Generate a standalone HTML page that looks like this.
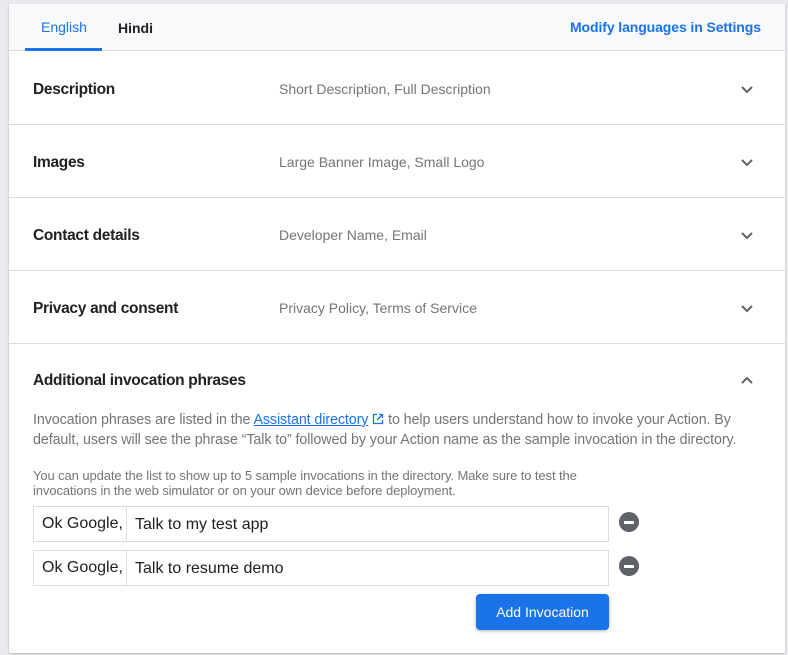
<!DOCTYPE html>
<html><head><meta charset="utf-8"><style>
*{margin:0;padding:0;box-sizing:border-box}
body{width:788px;height:655px;background:#e8eaed;font-family:"Liberation Sans",Arial,sans-serif;position:relative;overflow:hidden;color:#202124}
.card{position:absolute;left:9px;top:4px;width:776px;height:649px;background:#fff;box-shadow:0 1px 2px rgba(60,64,67,.3)}
.hdr{position:absolute;left:0;top:0;width:776px;height:47px;background:#f8f9fa;border-bottom:1px solid #dadce0}
.a{position:absolute;white-space:nowrap}
.row{position:absolute;left:0;width:776px;height:73px;border-bottom:1px solid #dadce0}
.t{position:absolute;left:24px;top:29px;font-size:15.5px;font-weight:bold;letter-spacing:-0.3px}
.s{position:absolute;left:270px;top:29px;font-size:14px;color:#757575}
.chev{position:absolute;left:731px;top:33px}
.inp{position:absolute;left:24px;width:576px;height:36px;border:1px solid #dadce0;font-size:16px}
.inp .p{position:absolute;left:8px;top:8px}
.inp .d{position:absolute;left:92px;top:0;height:34px;border-left:1px solid #dadce0}
.inp .v{position:absolute;left:101px;top:9px}
.minus{position:absolute;left:610px;width:20px;height:20px;border-radius:50%;background:#5f6368}
.minus:after{content:"";position:absolute;left:5px;top:9px;width:10px;height:2.5px;background:#fff}
</style></head><body>
<div class="card">
<div class="hdr">
<div class="a" style="left:32px;top:15px;font-size:14px;color:#1a73e8">English</div>
<div class="a" style="left:16px;top:44px;width:77px;height:3px;background:#1a73e8"></div>
<div class="a" style="left:109px;top:16px;font-size:14px;font-weight:bold;color:#202124">Hindi</div>
<div class="a" style="left:561px;top:15px;font-size:14px;font-weight:bold;color:#1a73e8;letter-spacing:-0.1px">Modify languages in Settings</div>
</div>
<div class="row" style="top:48px"><div class="t">Description</div><div class="s">Short Description, Full Description</div><svg class="chev" width="14" height="9" viewBox="0 0 14 9"><path d="M2 2l5 5 5-5" stroke="#5f6368" stroke-width="2" fill="none"/></svg></div>
<div class="row" style="top:121px"><div class="t">Images</div><div class="s">Large Banner Image, Small Logo</div><svg class="chev" width="14" height="9" viewBox="0 0 14 9"><path d="M2 2l5 5 5-5" stroke="#5f6368" stroke-width="2" fill="none"/></svg></div>
<div class="row" style="top:194px"><div class="t">Contact details</div><div class="s">Developer Name, Email</div><svg class="chev" width="14" height="9" viewBox="0 0 14 9"><path d="M2 2l5 5 5-5" stroke="#5f6368" stroke-width="2" fill="none"/></svg></div>
<div class="row" style="top:267px"><div class="t">Privacy and consent</div><div class="s">Privacy Policy, Terms of Service</div><svg class="chev" width="14" height="9" viewBox="0 0 14 9"><path d="M2 2l5 5 5-5" stroke="#5f6368" stroke-width="2" fill="none"/></svg></div>
<div class="a" style="left:24px;top:368px;font-size:15.5px;font-weight:bold;letter-spacing:-0.3px">Additional invocation phrases</div>
<svg class="a" style="left:731px;top:372px" width="14" height="9" viewBox="0 0 14 9"><path d="M2 7l5-5 5 5" stroke="#5f6368" stroke-width="2" fill="none"/></svg>
<div class="a" style="left:24px;top:406px;font-size:14.3px;color:#757575;line-height:20px;letter-spacing:-0.1px">Invocation phrases are listed in the <span style="color:#1a73e8;text-decoration:underline">Assistant directory</span> <svg width="12" height="12" viewBox="0 0 12 12" style="vertical-align:-1px"><path d="M5 1.5H1.5v9h9V7M7 1.5h3.5V5M10.5 1.5L5 7" stroke="#1a73e8" stroke-width="1.3" fill="none"/></svg> to help users understand how to invoke your Action. By<br>default, users will see the phrase “Talk to” followed by your Action name as the sample invocation in the directory.</div>
<div class="a" style="left:24px;top:464px;font-size:13px;color:#757575;line-height:15px;letter-spacing:-0.1px">You can update the list to show up to 5 sample invocations in the directory. Make sure to test the<br>invocations in the web simulator or on your own device before deployment.</div>
<div class="inp" style="top:502px"><span class="p">Ok Google,</span><div class="d"></div><span class="v">Talk to my test app</span></div>
<div class="minus" style="top:508px"></div>
<div class="inp" style="top:546px"><span class="p">Ok Google,</span><div class="d"></div><span class="v">Talk to resume demo</span></div>
<div class="minus" style="top:552px"></div>
<div class="a" style="left:467px;top:590px;width:133px;height:36px;background:#1a73e8;border-radius:4px;color:#fff;font-size:14px;text-align:center;line-height:36px;box-shadow:0 1px 3px rgba(60,64,67,.4)">Add Invocation</div>
</div>
</body></html>
